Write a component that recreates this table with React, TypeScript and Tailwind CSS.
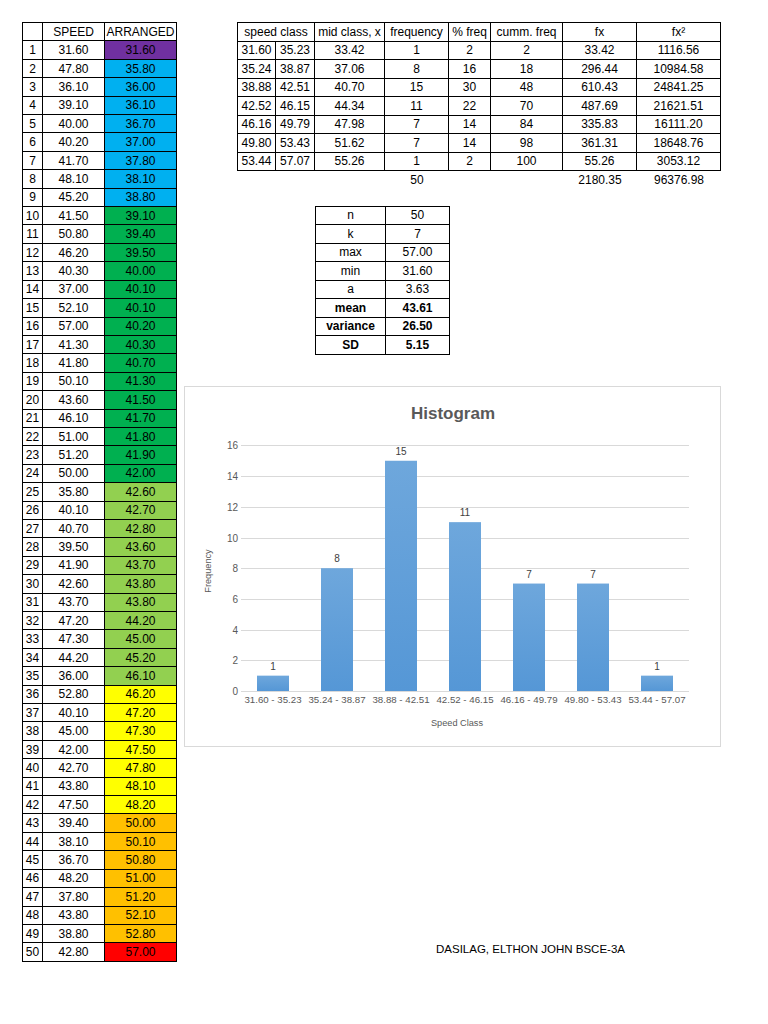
const speeds = [
  "31.60", "47.80", "36.10", "39.10", "40.00", "40.20", "41.70", "48.10", "45.20", "41.50",
  "50.80", "46.20", "40.30", "37.00", "52.10", "57.00", "41.30", "41.80", "50.10", "43.60",
  "46.10", "51.00", "51.20", "50.00", "35.80", "40.10", "40.70", "39.50", "41.90", "42.60",
  "43.70", "47.20", "47.30", "44.20", "36.00", "52.80", "40.10", "45.00", "42.00", "42.70",
  "43.80", "47.50", "39.40", "38.10", "36.70", "48.20", "37.80", "43.80", "38.80", "42.80",
];

const arranged = [
  "31.60", "35.80", "36.00", "36.10", "36.70", "37.00", "37.80", "38.10", "38.80", "39.10",
  "39.40", "39.50", "40.00", "40.10", "40.10", "40.20", "40.30", "40.70", "41.30", "41.50",
  "41.70", "41.80", "41.90", "42.00", "42.60", "42.70", "42.80", "43.60", "43.70", "43.80",
  "43.80", "44.20", "45.00", "45.20", "46.10", "46.20", "47.20", "47.30", "47.50", "47.80",
  "48.10", "48.20", "50.00", "50.10", "50.80", "51.00", "51.20", "52.10", "52.80", "57.00",
];

// colour band for each sorted row
function bandClass(n: number) {
  if (n === 1) return "bg-[#7030a0]";
  if (n <= 9) return "bg-[#00b0f0]";
  if (n <= 24) return "bg-[#00b050]";
  if (n <= 35) return "bg-[#92d050]";
  if (n <= 42) return "bg-[#ffff00]";
  if (n <= 49) return "bg-[#ffc000]";
  return "bg-[#ff0000]";
}

const classes = [
  ["31.60", "35.23", "33.42", "1", "2", "2", "33.42", "1116.56"],
  ["35.24", "38.87", "37.06", "8", "16", "18", "296.44", "10984.58"],
  ["38.88", "42.51", "40.70", "15", "30", "48", "610.43", "24841.25"],
  ["42.52", "46.15", "44.34", "11", "22", "70", "487.69", "21621.51"],
  ["46.16", "49.79", "47.98", "7", "14", "84", "335.83", "16111.20"],
  ["49.80", "53.43", "51.62", "7", "14", "98", "361.31", "18648.76"],
  ["53.44", "57.07", "55.26", "1", "2", "100", "55.26", "3053.12"],
];

const stats = [
  { k: "n", v: "50" },
  { k: "k", v: "7" },
  { k: "max", v: "57.00" },
  { k: "min", v: "31.60" },
  { k: "a", v: "3.63" },
  { k: "mean", v: "43.61", bold: true },
  { k: "variance", v: "26.50", bold: true },
  { k: "SD", v: "5.15", bold: true },
];

const bins = [
  { label: "31.60 - 35.23", f: 1 },
  { label: "35.24 - 38.87", f: 8 },
  { label: "38.88 - 42.51", f: 15 },
  { label: "42.52 - 46.15", f: 11 },
  { label: "46.16 - 49.79", f: 7 },
  { label: "49.80 - 53.43", f: 7 },
  { label: "53.44 - 57.07", f: 1 },
];

const cell = "flex items-center justify-center border-r border-b border-black h-[18.42px]";
const cellB = "flex items-center justify-center border-r border-b border-black h-[18.5px]";

const SpeedTable = () => (
  <div className="grid grid-cols-[20px_62px_72px] border-l border-t border-black w-[155px]">
    <div className={cell}></div>
    <div className={cell}>SPEED</div>
    <div className={cell}>ARRANGED</div>
    {speeds.map((s, i) => (
      <div key={i} className="contents">
        <div className={cell}>{i + 1}</div>
        <div className={cell}>{s}</div>
        <div className={`${cell} ${bandClass(i + 1)}`}>{arranged[i]}</div>
      </div>
    ))}
  </div>
);

const ClassTable = () => (
  <div className="ml-[53px]">
    <div className="grid grid-cols-[38px_39px_70px_64px_42px_72px_74px_84px] border-l border-t border-black w-[484px]">
      <div className={`${cellB} col-span-2`}>speed class</div>
      <div className={cellB}>mid class, x</div>
      <div className={cellB}>frequency</div>
      <div className={cellB}>% freq</div>
      <div className={cellB}>cumm. freq</div>
      <div className={cellB}>fx</div>
      <div className={cellB}>fx²</div>
      {classes.map((r, i) => (
        <div key={i} className="contents">
          {r.map((c, j) => (
            <div key={j} className={cellB}>
              {c}
            </div>
          ))}
        </div>
      ))}
    </div>
    <div className="grid grid-cols-[39px_39px_70px_64px_42px_72px_74px_84px] h-[18.5px] items-center text-center">
      <div></div>
      <div></div>
      <div></div>
      <div>50</div>
      <div></div>
      <div></div>
      <div>2180.35</div>
      <div>96376.98</div>
    </div>
  </div>
);

const StatsTable = () => (
  <div className="ml-[131px] mt-[16px] grid grid-cols-[70px_64px] border-l border-t border-black w-[135px]">
    {stats.map((s) => (
      <div key={s.k} className="contents">
        <div className={`${cellB} ${s.bold ? "font-bold" : ""}`}>{s.k}</div>
        <div className={`${cellB} ${s.bold ? "font-bold" : ""}`}>{s.v}</div>
      </div>
    ))}
  </div>
);

const Histogram = () => {
  const base = 304;
  const unit = 15.35;
  const yOf = (v: number) => base - v * unit;
  return (
    <div className="mt-[31px] w-[537px] h-[361px] border border-[#d9d9d9] bg-white">
      <svg width={535} height={359} className="block">
        <defs>
          <linearGradient id="bar" x1="0" y1="0" x2="0" y2="1">
            <stop offset="0" stopColor="#6ea7dc" />
            <stop offset="1" stopColor="#5597d6" />
          </linearGradient>
        </defs>
        <text x={268} y={32} textAnchor="middle" fontSize={17} fontWeight={700} fill="#595959">
          Histogram
        </text>
        {[0, 2, 4, 6, 8, 10, 12, 14, 16].map((v) => {
          const y = Math.round(yOf(v)) + 0.5;
          return (
            <g key={v}>
              <line x1={56} x2={504} y1={y} y2={y} stroke="#d9d9d9" strokeWidth={1} />
              <text x={53} y={y + 3.5} textAnchor="end" fontSize={10} fill="#595959">
                {v}
              </text>
            </g>
          );
        })}
        {bins.map((b, i) => {
          const x = 56 + 64 * i;
          const top = yOf(b.f);
          return (
            <g key={b.label}>
              <rect x={x + 16} y={top} width={32} height={base - top} fill="url(#bar)" />
              <text x={x + 32} y={top - 6} textAnchor="middle" fontSize={10} fill="#404040">
                {b.f}
              </text>
              <text x={x + 32} y={315.5} textAnchor="middle" fontSize={9.7} fill="#595959">
                {b.label}
              </text>
            </g>
          );
        })}
        <text x={272} y={339} textAnchor="middle" fontSize={9.2} fill="#595959">
          Speed Class
        </text>
        <text
          x={0}
          y={0}
          transform="translate(26 184) rotate(-90)"
          textAnchor="middle"
          fontSize={9.2}
          fill="#595959">
          Frequency
        </text>
      </svg>
    </div>
  );
};

export default function App() {
  return (
    <div className="w-[768px] h-[1024px] bg-white text-black text-[12px] leading-none font-['Liberation_Sans',Arial,sans-serif]">
      <div className="flex pt-[22px] pl-[22px] gap-[7px]">
        <SpeedTable />
        <div className="flex flex-col">
          <ClassTable />
          <StatsTable />
          <Histogram />
          <div className="mt-[197px] ml-[252px] text-[11.5px]">DASILAG, ELTHON JOHN BSCE-3A</div>
        </div>
      </div>
    </div>
  );
}
